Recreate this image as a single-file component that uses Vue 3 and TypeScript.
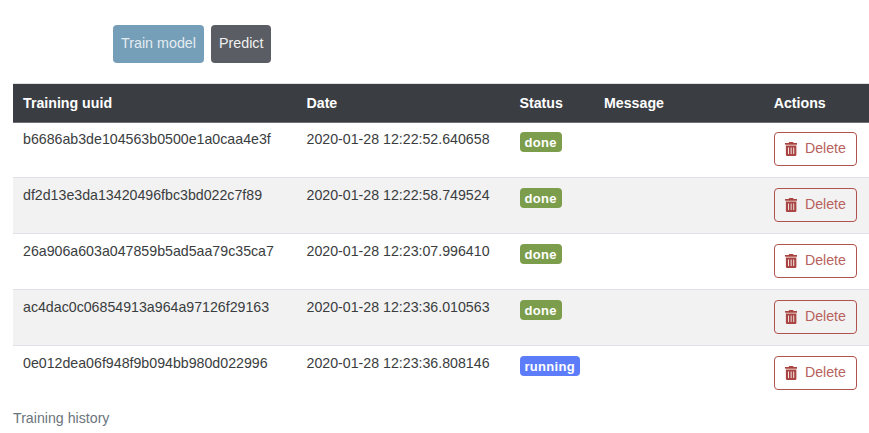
<script setup lang="ts">
const rows = [
  { id: 'b6686ab3de104563b0500e1a0caa4e3f', date: '2020-01-28 12:22:52.640658', status: 'done' },
  { id: 'df2d13e3da13420496fbc3bd022c7f89', date: '2020-01-28 12:22:58.749524', status: 'done' },
  { id: '26a906a603a047859b5ad5aa79c35ca7', date: '2020-01-28 12:23:07.996410', status: 'done' },
  { id: 'ac4dac0c06854913a964a97126f29163', date: '2020-01-28 12:23:36.010563', status: 'done' },
  { id: '0e012dea06f948f9b094bb980d022996', date: '2020-01-28 12:23:36.808146', status: 'running' },
]
</script>

<template>
  <div class="page">
    <div class="toolbar">
      <button class="btn train">Train model</button>
      <button class="btn predict">Predict</button>
    </div>
    <table class="tbl">
      <caption>Training history</caption>
      <thead>
        <tr>
          <th class="c1">Training uuid</th>
          <th class="c2">Date</th>
          <th class="c3">Status</th>
          <th class="c4">Message</th>
          <th class="c5">Actions</th>
        </tr>
      </thead>
      <tbody>
        <tr v-for="r in rows" :key="r.id">
          <td>{{ r.id }}</td>
          <td>{{ r.date }}</td>
          <td><span class="badge" :class="r.status">{{ r.status }}</span></td>
          <td></td>
          <td>
            <button class="del">
              <svg class="ico" viewBox="0 0 448 512" width="12.25" height="14" aria-hidden="true">
                <path fill="currentColor" d="M32 464a48 48 0 0 0 48 48h288a48 48 0 0 0 48-48V128H32zm272-256a16 16 0 0 1 32 0v224a16 16 0 0 1-32 0zm-96 0a16 16 0 0 1 32 0v224a16 16 0 0 1-32 0zm-96 0a16 16 0 0 1 32 0v224a16 16 0 0 1-32 0zM432 32H312l-9.4-18.7A24 24 0 0 0 281.1 0H166.8a23.7 23.7 0 0 0-21.4 13.3L136 32H16A16 16 0 0 0 0 48v32a16 16 0 0 0 16 16h416a16 16 0 0 0 16-16V48a16 16 0 0 0-16-16z"/>
              </svg>
              <span class="del-label">Delete</span>
            </button>
          </td>
        </tr>
      </tbody>
    </table>
  </div>
</template>

<style>
html, body { margin: 0; background: #fff; }
</style>

<style scoped>
.page {
  font-family: "Liberation Sans", Arial, sans-serif;
  font-size: 14.2px;
  line-height: 1.5;
  color: #3a3d40;
  padding: 25px 0 0 13px;
}
.toolbar {
  display: flex;
  gap: 7px;
  padding-left: 100px;
  margin-bottom: 20px;
}
.btn {
  font: inherit;
  font-size: 14.3px;
  height: 38px;
  padding: 0 8px;
  border: 0;
  border-radius: 4px;
}
.train { background: #759eb8; color: #e4ecf1; }
.predict { background: #5a5d63; color: #f0f0f0; }
.tbl {
  width: 856px;
  border-collapse: separate;
  border-spacing: 0;
  table-layout: fixed;
  caption-side: bottom;
}
caption {
  text-align: left;
  color: #6c757d;
  padding: 7px 0 0;
}
th {
  background: #3a3d42;
  color: #fff;
  text-align: left;
  font-weight: 700;
  padding: 9px 10px 7px;
  height: 40px;
  box-sizing: border-box;
  vertical-align: middle;
  border-top: 1px solid #dee2e6;
  border-bottom: 1px solid #6c7075;
}
.c1 { width: 283.5px; }
.c2 { width: 213px; }
.c3 { width: 84.5px; }
.c4 { width: 169.7px; }
td {
  padding: 7px 10px 5px;
  height: 56px;
  box-sizing: border-box;
  vertical-align: top;
  border-top: 1px solid #dee2e6;
}
tbody tr:first-child td { height: 54px; padding-top: 6px; border-top: 0; }
tbody tr:nth-child(odd) td { background: #fff; }
tbody tr:nth-child(even) td { background: #f2f2f2; }
.badge {
  display: inline-block;
  font-size: 13px;
  font-weight: 700;
  line-height: 1;
  padding: 3.5px 5px;
  margin-top: 3px;
  border-radius: 4px;
  color: #fff;
  letter-spacing: .3px;
}
.done { background: #7c9e4c; }
.running { background: #5c7cfa; }
.del {
  font: inherit;
  display: inline-flex;
  align-items: center;
  gap: 7.5px;
  height: 34px;
  width: 83.3px;
  margin-top: 3px;
  box-sizing: border-box;
  padding: 0 0 0 10.5px;
  border: 1px solid #b0524e;
  border-radius: 4px;
  background: transparent;
  color: #a94442;
}
.del-label { color: #b8625e; }
.ico { flex: none; }
</style>
